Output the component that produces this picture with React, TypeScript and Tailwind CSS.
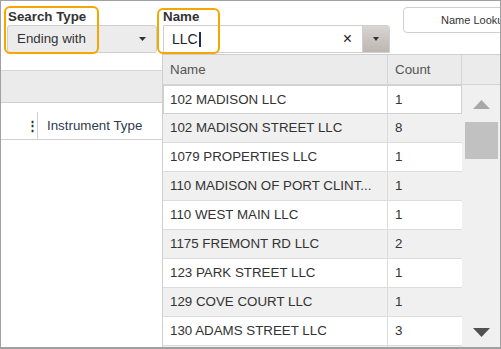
import React from 'react'

const rows = [
    { name: '102 MADISON LLC', count: 1 },
    { name: '102 MADISON STREET LLC', count: 8 },
    { name: '1079 PROPERTIES LLC', count: 1 },
    { name: '110 MADISON OF PORT CLINT...', count: 1 },
    { name: '110 WEST MAIN LLC', count: 1 },
    { name: '1175 FREMONT RD LLC', count: 2 },
    { name: '123 PARK STREET LLC', count: 1 },
    { name: '129 COVE COURT LLC', count: 1 },
    { name: '130 ADAMS STREET LLC', count: 3 },
]

const App = () => {
    return (
        <div
            className="relative w-[501px] h-[349px] overflow-hidden bg-white border border-b-2 border-[#a0a0a0] text-[#333] flex flex-col"
            style={{ fontFamily: '"Liberation Sans", Arial, sans-serif' }}
        >
            {/* top filter bar */}
            <div className="h-[69px] shrink-0 flex flex-row pt-[8px]">
                <div className="ml-[6px] w-[150px] shrink-0 flex flex-col">
                    <span className="h-[16px] pl-[1px] text-[13.33px] font-bold leading-[16px]">Search Type</span>
                    <div className="h-[28px] flex flex-row items-center justify-between pl-[9px] pr-[10px] bg-[#ececec] border border-[#cfcfcf] rounded-[3px]">
                        <span className="text-[13.33px]">Ending with</span>
                        <svg width="7" height="4" viewBox="0 0 7 4">
                            <polygon points="0,0 7,0 3.5,4" fill="#333" />
                        </svg>
                    </div>
                </div>

                <div className="ml-[6px] w-[227px] shrink-0 flex flex-col">
                    <span className="h-[16px] text-[13.33px] font-bold leading-[16px]">Name</span>
                    <div className="h-[28px] flex flex-row border border-[#cfcfcf] rounded-tr-[3px] overflow-hidden">
                        <div className="flex-1 flex flex-row items-center bg-white pl-[8px] pr-[10px]">
                            <span className="text-[14px] text-[#222]">LLC</span>
                            <span className="w-[2px] h-[15px] bg-[#1f2d5a] ml-[1px]" />
                            <span className="ml-auto text-[16px] leading-none text-[#222]">×</span>
                        </div>
                        <div className="w-[27px] flex items-center justify-center bg-gradient-to-b from-[#d9d5d2] to-[#bdb6b1] border-l border-[#cfcfcf]">
                            <svg width="6" height="4" viewBox="0 0 6 4">
                                <polygon points="0,0 6,0 3,4" fill="#333" />
                            </svg>
                        </div>
                    </div>
                </div>

                <div className="ml-[13px] mt-[-2px] w-[130px] shrink-0 h-[26px] flex items-center border border-[#cfcfcf] rounded-[4px] pl-[37px] whitespace-nowrap">
                    <span className="text-[11px] text-[#333]">Name Lookup</span>
                </div>
            </div>

            {/* results grid behind the dropdown */}
            <div className="flex-1 flex flex-col border-t border-[#d6d6d6]">
                <div className="h-[32px] shrink-0 bg-[#ebebeb] border-b border-[#d0d0d0]" />
                <div className="h-[37px] shrink-0 flex flex-row items-end border-b border-[#d0d0d0]">
                    <div className="w-[37px] h-[27px] flex items-center pl-[25px] border-r border-[#d0d0d0]">
                        <span className="text-[13px] font-bold leading-none">⋮</span>
                    </div>
                    <div className="h-[27px] flex items-center pl-[9px]">
                        <span className="text-[13.33px] text-[#2e3b4e]">Instrument Type</span>
                    </div>
                </div>
            </div>

            {/* name dropdown */}
            <div className="absolute left-[161px] top-[53px] right-0 bottom-0 flex flex-col bg-[#f0f0f0] border-l border-t border-[#cfcfcf] text-[13.33px]">
                <div className="h-[30px] shrink-0 flex flex-row bg-[#ebebeb] border-b border-[#d4d4d4] text-[#555]">
                    <div className="w-[225px] flex items-center pl-[7px] border-r border-[#d4d4d4]">Name</div>
                    <div className="w-[74px] flex items-center pl-[7px] border-r border-[#d4d4d4]">Count</div>
                    <div className="flex-1" />
                </div>
                <div className="flex-1 min-h-0 flex flex-row">
                    <div className="w-[299px] flex flex-col">
                        {rows.map((r, i) => (
                            <div
                                key={r.name}
                                className={
                                    'h-[29px] shrink-0 flex flex-row ' +
                                    (i === 0
                                        ? 'bg-white border border-[#d0d0d0]'
                                        : i % 2 === 0
                                        ? 'bg-white border-b border-[#dcdcdc]'
                                        : 'bg-[#f0f0f0] border-b border-[#dcdcdc]')
                                }
                            >
                                <div className={'flex items-center border-r border-[#dcdcdc] ' + (i === 0 ? 'pl-[6px] w-[224px]' : 'pl-[7px] w-[225px]')}>
                                    <span className="text-[#333]">{r.name}</span>
                                </div>
                                <div className="flex-1 flex items-center pl-[7px]">
                                    <span className="text-[#333]">{r.count}</span>
                                </div>
                            </div>
                        ))}
                        <div className="flex-1 flex flex-row bg-[#f0f0f0]">
                            <div className="w-[225px] border-r border-[#dcdcdc]" />
                        </div>
                    </div>
                    <div className="flex-1 flex flex-col items-center pt-[15px] pb-[10px]">
                        <svg width="17" height="9" viewBox="0 0 17 9">
                            <polygon points="0,9 17,9 8.5,0" fill="#a8a8a8" />
                        </svg>
                        <div className="mt-[13px] w-[33px] h-[37px] bg-[#c1c1c1]" />
                        <svg className="mt-auto" width="17" height="9" viewBox="0 0 17 9">
                            <polygon points="0,0 17,0 8.5,9" fill="#505050" />
                        </svg>
                    </div>
                </div>
            </div>

            {/* highlight annotations */}
            <div className="absolute left-[3px] top-[5px] w-[95px] h-[48px] border-2 border-[#f5a700] rounded-[6px] pointer-events-none" />
            <div className="absolute left-[156px] top-[7px] w-[63px] h-[46px] border-2 border-[#f5a700] rounded-[6px] pointer-events-none" />
        </div>
    )
}

export default App
